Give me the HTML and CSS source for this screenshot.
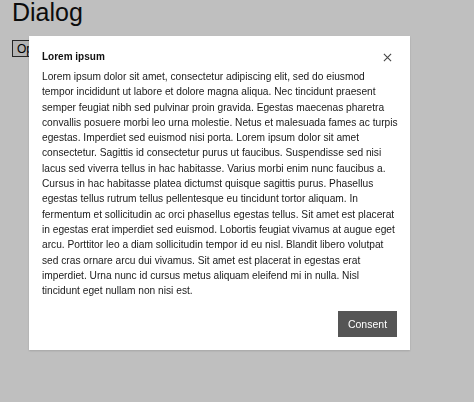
FILE: index.html
```html
<!DOCTYPE html>
<html lang="en">
<head>
    <meta charset="UTF-8">
    <meta name="viewport" content="width=device-width, initial-scale=1.0">
    <title>Dialog</title>
    <link rel="stylesheet" href="styles.css">
</head>
<body>
    <h1>Dialog</h1>
    <button class="open-btn">Open dialog</button>

    <!-- modal: backdrop covers the page, box sits on top -->
    <div class="backdrop">
        <div class="dialog">
            <div class="dialog-header">
                <h2>Lorem ipsum</h2>
                <button class="close-btn" aria-label="Close">
                    <svg width="9" height="9" viewBox="0 0 10 10">
                        <path d="M1 1L9 9M9 1L1 9" stroke="#444" stroke-width="1.2" fill="none"/>
                    </svg>
                </button>
            </div>
            <p class="dialog-body">
                Lorem ipsum dolor sit amet, consectetur adipiscing elit, sed do eiusmod tempor incididunt ut labore et dolore magna aliqua. Nec tincidunt praesent semper feugiat nibh sed pulvinar proin gravida. Egestas maecenas pharetra convallis posuere morbi leo urna molestie. Netus et malesuada fames ac turpis egestas. Imperdiet sed euismod nisi porta. Lorem ipsum dolor sit amet consectetur. Sagittis id consectetur purus ut faucibus. Suspendisse sed nisi lacus sed viverra tellus in hac habitasse. Varius morbi enim nunc faucibus a. Cursus in hac habitasse platea dictumst quisque sagittis purus. Phasellus egestas tellus rutrum tellus pellentesque eu tincidunt tortor aliquam. In fermentum et sollicitudin ac orci phasellus egestas tellus. Sit amet est placerat in egestas erat imperdiet sed euismod. Lobortis feugiat vivamus at augue eget arcu. Porttitor leo a diam sollicitudin tempor id eu nisl. Blandit libero volutpat sed cras ornare arcu dui vivamus. Sit amet est placerat in egestas erat imperdiet. Urna nunc id cursus metus aliquam eleifend mi in nulla. Nisl tincidunt eget nullam non nisi est.
            </p>
            <div class="dialog-footer">
                <button class="consent-btn">Consent</button>
            </div>
        </div>
    </div>
</body>
</html>
```

FILE: styles.css
```css
body {
    font-family: "Liberation Sans", Arial, sans-serif;
    margin: 0;
    padding: 0 12px;
    background: #fff;
}

h1 {
    font-size: 25px;
    font-weight: normal;
    margin: -3px 0 0;
    line-height: 30px;
    color: #111;
}

.open-btn {
    margin-top: 13px;
    font-family: inherit;
    font-size: 12px;
    padding: 0 4px;
    height: 17px;
    border: 1px solid #333;
    background: #efefef;
}

.backdrop {
    position: fixed;
    inset: 0;
    background: rgba(0, 0, 0, 0.25);
}

.dialog {
    position: absolute;
    left: 29px;
    top: 36px;
    width: 381px;
    box-sizing: border-box;
    background: #fff;
    padding: 15px 12px 13px 13px;
    box-shadow: 0 1px 2px rgba(0, 0, 0, 0.15);
}

.dialog-header {
    display: flex;
    justify-content: space-between;
    align-items: center;
    height: 12px;
}

.dialog-header h2 {
    margin: 0;
    font-size: 10px;
    line-height: 12px;
    font-weight: bold;
    color: #111;
}

.close-btn {
    border: none;
    background: none;
    padding: 0;
    margin-right: 6px;
    display: flex;
}

.dialog-body {
    margin: 6px 0 0;
    font-size: 10.2px;
    line-height: 15.3px;
    color: #1a1a1a;
}

.dialog-footer {
    display: flex;
    justify-content: flex-end;
    margin-top: 13px;
}

.consent-btn {
    background: #555;
    color: #fff;
    border: none;
    font-family: inherit;
    font-size: 10.5px;
    width: 59px;
    height: 26px;
    margin-right: 1px;
}
```
